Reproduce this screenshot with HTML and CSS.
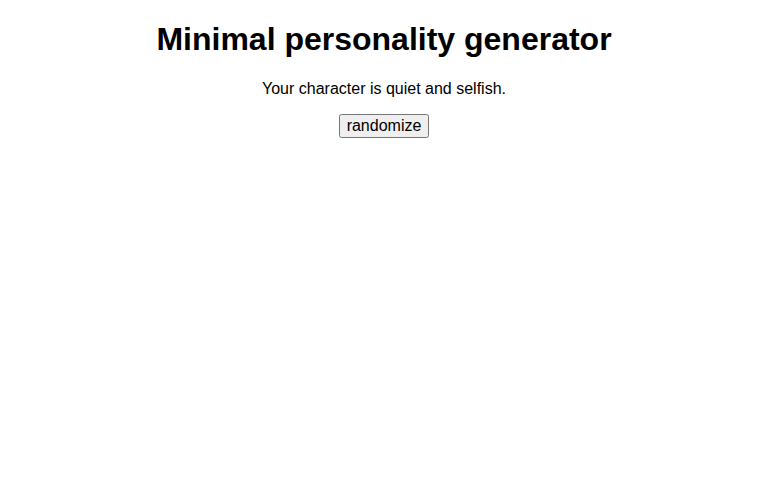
FILE: index.html
```html
<!DOCTYPE html>
<html lang="en">
<head>
<meta charset="utf-8">
<title>Minimal personality generator</title>
<link rel="stylesheet" href="styles.css">
</head>
<body>
<main class="app">
  <h1 class="app-title">Minimal personality generator</h1>
  <p class="app-result">Your character is quiet and selfish.</p>
  <button class="app-button" type="button">randomize</button>
</main>
</body>
</html>
```
FILE: styles.css
```css
body {
  margin: 0;
  padding: 0 8px;
  font-family: "Liberation Sans", Arial, sans-serif;
  background: #fff;
  color: #000;
}

.app {
  text-align: center;
}

.app-title {
  margin: 21.44px 0;
  font-size: 32px;
  font-weight: bold;
}

.app-result {
  margin: 16px 0;
  font-size: 16px;
}

.app-button {
  font-family: "Liberation Sans", Arial, sans-serif;
  font-size: 16px;
}
```
